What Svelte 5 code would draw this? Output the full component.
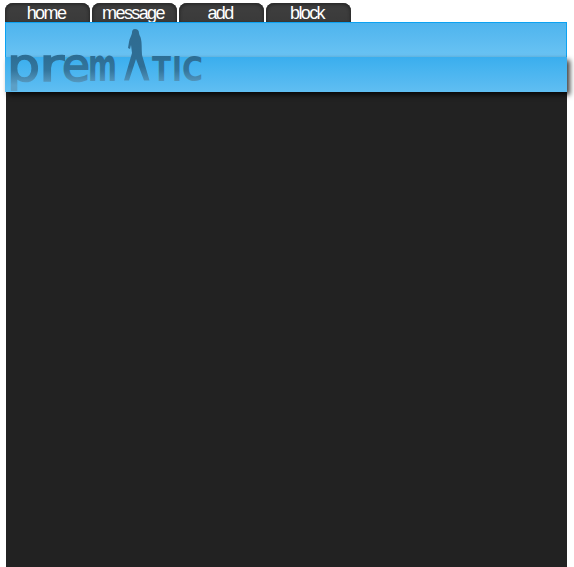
<script>
  const tabs = ['home', 'message', 'add', 'block'];
  const letters = [
    { c: 'p', x: 1, w: 33, size: 46, weight: 400, sw: 1.6 },
    { c: 'r', x: 33, w: 25, size: 46, weight: 400, sw: 1.6 },
    { c: 'e', x: 56, w: 28, size: 46, weight: 400, sw: 1.6 },
    { c: 'm', x: 82, w: 29, size: 46, weight: 700, sw: 0 },
    { c: 'T', x: 146, w: 19, size: 34, weight: 700, sw: 0 },
    { c: 'I', x: 166, w: 10, size: 34, weight: 700, sw: 0 },
    { c: 'C', x: 176, w: 21, size: 34, weight: 700, sw: 0 }
  ];
</script>

<div class="page">
  <nav class="tabs">
    {#each tabs as t}
      <a class="tab" href="#top">{t}</a>
    {/each}
  </nav>
  <header class="header">
    <div class="band top"></div>
    <div class="band bottom"></div>
    <svg class="logo" width="200" height="68" viewBox="0 0 200 68" role="img" aria-label="prematic">
      <defs>
        <linearGradient id="ink" gradientUnits="userSpaceOnUse" x1="0" y1="32" x2="0" y2="62">
          <stop offset="0" stop-color="#2c6d93" />
          <stop offset="0.5" stop-color="#33759c" />
          <stop offset="1" stop-color="#5c9fc6" />
        </linearGradient>
        <linearGradient id="fig" gradientUnits="userSpaceOnUse" x1="0" y1="6" x2="0" y2="60">
          <stop offset="0" stop-color="#2f6b90" />
          <stop offset="0.7" stop-color="#2f6f96" />
          <stop offset="1" stop-color="#5496bd" />
        </linearGradient>
      </defs>
      {#each letters as l}
        <text class="word" x={l.x} y="58" font-size={l.size} font-weight={l.weight} stroke-width={l.sw} textLength={l.w} lengthAdjust="spacingAndGlyphs" fill="url(#ink)" stroke={l.sw ? 'url(#ink)' : 'none'}>{l.c}</text>
      {/each}
      <path fill="url(#fig)" d="M129 6C126.500 6 126 8 126 10C125.500 13 123.500 15 123 19L122 25L124 26L125 22L126 30L118 57.500L123 57.500L130 36L138 57.500L143.500 57.500L136 32C135.500 25 136 20 135 16C134.500 13 133 12 133 10C133 7.500 131.500 6 129 6Z" />
    </svg>
  </header>
  <main class="panel"></main>
</div>

<style>
  :global(body) {
    margin: 0;
    background: #fff;
  }
  .page {
    height: 100vh;
    overflow: hidden;
    box-sizing: border-box;
    padding-top: 3px;
    display: flex;
    flex-direction: column;
  }
  .tabs {
    display: flex;
    gap: 2px;
    margin-left: 5px;
    height: 19px;
  }
  .tab {
    width: 85px;
    box-sizing: border-box;
    padding-right: 3px;
    border-radius: 8px 8px 0 0;
    background: linear-gradient(#3f3f3f, #3a3a3a);
    box-shadow: inset 0 3px 3px -1px #2b2b2b, inset 3px 0 3px -2px #2b2b2b, inset -3px 0 3px -2px #2b2b2b;
    color: #fff;
    font: 18px/20px "Liberation Sans", Arial, sans-serif;
    letter-spacing: -1.6px;
    text-align: center;
    text-decoration: none;
  }
  .header {
    position: relative;
    z-index: 1;
    margin: 0 7px 0 5px;
    height: 70px;
    box-sizing: border-box;
    display: flex;
    flex-direction: column;
    border: 1px solid #0ba2f2;
    border-bottom: 0;
  }
  .band.top {
    height: 34px;
    background: linear-gradient(#4eb4ee, #6ac3f3);
  }
  .band.bottom {
    flex: 1;
    background: linear-gradient(#3aaeee, #60bef2);
    box-shadow: 3px 3px 5px rgba(0, 0, 0, 0.75);
    margin: 0 -1px;
    padding: 0 1px;
  }
  .logo {
    position: absolute;
    left: 0;
    top: 0;
  }
  .word {
    font-family: "DejaVu Sans", sans-serif;
  }
  .panel {
    flex: 1;
    margin: 0 7px 0 6px;
    background: #222;
  }
</style>
